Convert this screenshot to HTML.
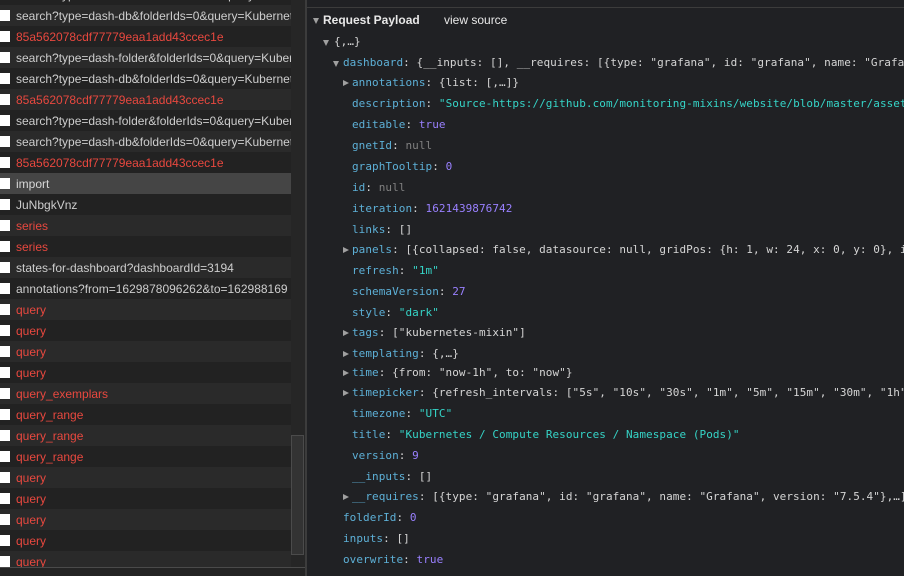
<!DOCTYPE html><html><head><style>
*{margin:0;padding:0;box-sizing:border-box}
body{width:904px;height:576px;overflow:hidden;background:#202124;position:relative;font-family:"Liberation Sans",sans-serif}
#left{position:absolute;left:0;top:0;width:291px;height:567px;overflow:hidden;background:#232323}
.r{position:absolute;left:0;width:291px;height:21px;font-size:12px;line-height:22px;color:#cdcdcd;white-space:nowrap;overflow:hidden;padding-left:16px}
.r::before{content:"";position:absolute;left:0;top:5px;width:10px;height:11px;background:#fff}
.r.a{background:#2a2a2a}.r.b{background:#222}
.r.e{color:#e8483f}.r.sel{background:#454545;color:#d8d8d8}
#sb{position:absolute;left:291px;top:0;width:14px;height:567px;background:#262626}
#th{position:absolute;left:291px;top:435px;width:13px;height:120px;background:#333;border:1px solid #4b4b4b}
#div{position:absolute;left:305px;top:0;width:2px;height:576px;background:#3c3c3c}
#bot{position:absolute;left:0;top:567px;width:305px;height:9px;background:#242424;border-top:1px solid #4a4a4a}
#topl{position:absolute;left:307px;top:7px;width:597px;height:1px;background:#3c3c3c}
.h{position:absolute;top:13px;font-size:12px;color:#e8e8e8}
.t{position:absolute;font-family:"DejaVu Sans Mono","Liberation Mono",monospace;font-size:11px;letter-spacing:.06px;color:#d5d5d5;white-space:pre;height:20px;line-height:20px}
.k{color:#5db0d7}.n{color:#9980ff}.s{color:#35d4c7}.nl{color:#808080}.tr{color:#9980ff}
.ar{position:absolute;width:0;height:0}
.dn{border-left:3.5px solid transparent;border-right:3.5px solid transparent;border-top:6px solid #a0a0a0}
.rt{border-top:3.5px solid transparent;border-bottom:3.5px solid transparent;border-left:6px solid #a0a0a0}
</style></head><body>
<div id="left">
<div class="r b" style="top:-16px">search?type=dash-folder&amp;folderIds=0&amp;query=Kuber</div>
<div class="r a" style="top:5px">search?type=dash-db&amp;folderIds=0&amp;query=Kubernet</div>
<div class="r b e" style="top:26px">85a562078cdf77779eaa1add43ccec1e</div>
<div class="r a" style="top:47px">search?type=dash-folder&amp;folderIds=0&amp;query=Kuber</div>
<div class="r b" style="top:68px">search?type=dash-db&amp;folderIds=0&amp;query=Kubernet</div>
<div class="r a e" style="top:89px">85a562078cdf77779eaa1add43ccec1e</div>
<div class="r b" style="top:110px">search?type=dash-folder&amp;folderIds=0&amp;query=Kuber</div>
<div class="r a" style="top:131px">search?type=dash-db&amp;folderIds=0&amp;query=Kubernet</div>
<div class="r b e" style="top:152px">85a562078cdf77779eaa1add43ccec1e</div>
<div class="r sel" style="top:173px">import</div>
<div class="r b" style="top:194px">JuNbgkVnz</div>
<div class="r a e" style="top:215px">series</div>
<div class="r b e" style="top:236px">series</div>
<div class="r a" style="top:257px">states-for-dashboard?dashboardId=3194</div>
<div class="r b" style="top:278px">annotations?from=1629878096262&amp;to=162988169</div>
<div class="r a e" style="top:299px">query</div>
<div class="r b e" style="top:320px">query</div>
<div class="r a e" style="top:341px">query</div>
<div class="r b e" style="top:362px">query</div>
<div class="r a e" style="top:383px">query_exemplars</div>
<div class="r b e" style="top:404px">query_range</div>
<div class="r a e" style="top:425px">query_range</div>
<div class="r b e" style="top:446px">query_range</div>
<div class="r a e" style="top:467px">query</div>
<div class="r b e" style="top:488px">query</div>
<div class="r a e" style="top:509px">query</div>
<div class="r b e" style="top:530px">query</div>
<div class="r a e" style="top:551px">query</div>
</div>
<div id="sb"></div><div id="th"></div><div id="div"></div><div id="bot"></div>
<div id="topl"></div>
<div class="ar dn" style="left:313px;top:18px"></div>
<div class="h" style="left:323px;font-weight:bold">Request Payload</div>
<div class="h" style="left:444px">view source</div>

<div class="ar dn" style="left:323px;top:40px"></div>
<div class="t" style="left:334px;top:32px">{,…}</div>
<div class="ar dn" style="left:333px;top:61px"></div>
<div class="t" style="left:343px;top:53px"><span class="k">dashboard</span>: {__inputs: [], __requires: [{type: "grafana", id: "grafana", name: "Grafa</div>
<div class="ar rt" style="left:343px;top:80px"></div>
<div class="t" style="left:352px;top:73px"><span class="k">annotations</span>: {list: [,…]}</div>
<div class="t" style="left:352px;top:94px"><span class="k">description</span>: <span class="s">"Source-https://github.com/monitoring-mixins/website/blob/master/asset</span></div>
<div class="t" style="left:352px;top:115px"><span class="k">editable</span>: <span class="tr">true</span></div>
<div class="t" style="left:352px;top:136px"><span class="k">gnetId</span>: <span class="nl">null</span></div>
<div class="t" style="left:352px;top:157px"><span class="k">graphTooltip</span>: <span class="n">0</span></div>
<div class="t" style="left:352px;top:178px"><span class="k">id</span>: <span class="nl">null</span></div>
<div class="t" style="left:352px;top:199px"><span class="k">iteration</span>: <span class="n">1621439876742</span></div>
<div class="t" style="left:352px;top:220px"><span class="k">links</span>: []</div>
<div class="ar rt" style="left:343px;top:247px"></div>
<div class="t" style="left:352px;top:240px"><span class="k">panels</span>: [{collapsed: false, datasource: null, gridPos: {h: 1, w: 24, x: 0, y: 0}, i</div>
<div class="t" style="left:352px;top:261px"><span class="k">refresh</span>: <span class="s">"1m"</span></div>
<div class="t" style="left:352px;top:282px"><span class="k">schemaVersion</span>: <span class="n">27</span></div>
<div class="t" style="left:352px;top:303px"><span class="k">style</span>: <span class="s">"dark"</span></div>
<div class="ar rt" style="left:343px;top:330px"></div>
<div class="t" style="left:352px;top:323px"><span class="k">tags</span>: ["kubernetes-mixin"]</div>
<div class="ar rt" style="left:343px;top:351px"></div>
<div class="t" style="left:352px;top:344px"><span class="k">templating</span>: {,…}</div>
<div class="ar rt" style="left:343px;top:370px"></div>
<div class="t" style="left:352px;top:363px"><span class="k">time</span>: {from: "now-1h", to: "now"}</div>
<div class="ar rt" style="left:343px;top:390px"></div>
<div class="t" style="left:352px;top:383px"><span class="k">timepicker</span>: {refresh_intervals: ["5s", "10s", "30s", "1m", "5m", "15m", "30m", "1h"</div>
<div class="t" style="left:352px;top:404px"><span class="k">timezone</span>: <span class="s">"UTC"</span></div>
<div class="t" style="left:352px;top:425px"><span class="k">title</span>: <span class="s">"Kubernetes / Compute Resources / Namespace (Pods)"</span></div>
<div class="t" style="left:352px;top:446px"><span class="k">version</span>: <span class="n">9</span></div>
<div class="t" style="left:352px;top:467px"><span class="k">__inputs</span>: []</div>
<div class="ar rt" style="left:343px;top:494px"></div>
<div class="t" style="left:352px;top:487px"><span class="k">__requires</span>: [{type: "grafana", id: "grafana", name: "Grafana", version: "7.5.4"},…]</div>
<div class="t" style="left:343px;top:508px"><span class="k">folderId</span>: <span class="n">0</span></div>
<div class="t" style="left:343px;top:529px"><span class="k">inputs</span>: []</div>
<div class="t" style="left:343px;top:550px"><span class="k">overwrite</span>: <span class="tr">true</span></div>
</body></html>
